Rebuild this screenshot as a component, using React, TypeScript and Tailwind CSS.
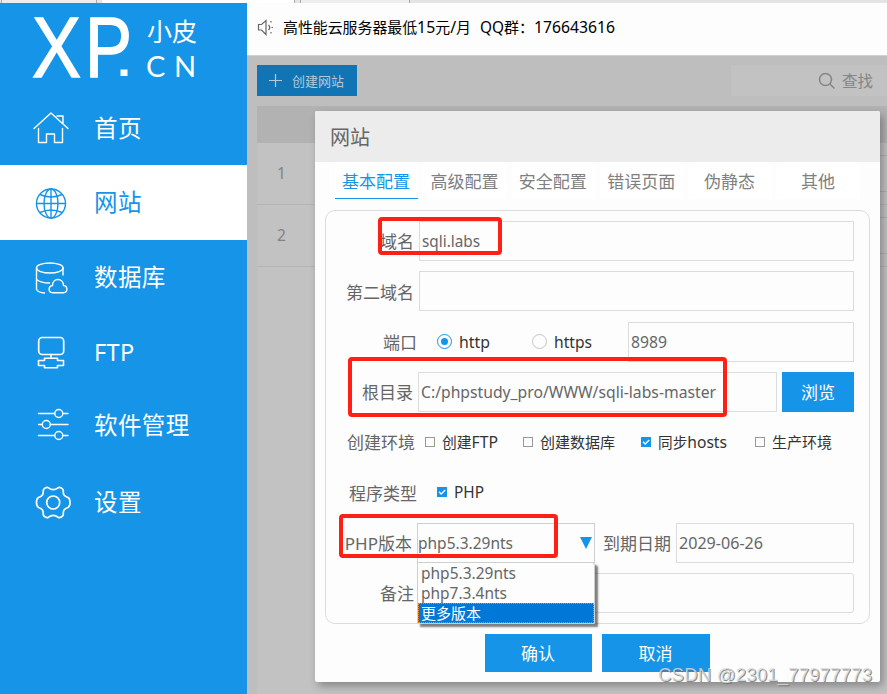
import React from 'react';
import clsx from 'clsx';

const tabs = ['基本配置', '高级配置', '安全配置', '错误页面', '伪静态', '其他'];

export default function App() {
  return (
    <div className="relative h-[694px] w-[887px] overflow-hidden bg-[#bebebe] font-['Noto_Sans','Noto_Sans_CJK_SC',sans-serif]">
      <TabStrip />
      <div className="flex h-[691px]">
        <Sidebar />
        <main className="flex min-w-0 flex-1 flex-col">
          <Notice />
          <SiteList />
        </main>
      </div>
      <SiteDialog />
      <div className="absolute left-[378px] top-[217px] h-[38px] w-[124px] rounded-[4px] border-4 border-[#ff2015]" />
      <div className="absolute left-[348px] top-[357px] h-[60px] w-[379px] rounded-[4px] border-4 border-[#ff2015]" />
      <div className="absolute left-[339px] top-[514px] h-[44px] w-[219px] rounded-[4px] border-4 border-[#ff2015]" />
      <svg className="absolute left-[654px] top-[661px]" width="224" height="28">
        <g fontFamily="Liberation Sans, sans-serif" fontSize="18.5">
          <text x="5" y="20.5" textLength="214" fill="#666" fillOpacity="0.75">CSDN @2301_77977773</text>
          <text x="4" y="19.5" textLength="214" fill="#d8d8d8" fillOpacity="0.85">CSDN @2301_77977773</text>
        </g>
      </svg>
    </div>
  );
}

function TabStrip() {
  return (
    <div className="flex h-[3px] bg-[#e3e4e6]">
      <div className="ml-px w-[96px] border-x border-[#aaa] bg-[#ececec]" />
      <div className="ml-[5px] w-[193px] border-r border-[#aaa] bg-white" />
      <div className="ml-[5px] w-[110px] border-x border-[#aaa] bg-[#eeeeee]" />
    </div>
  );
}

function Sidebar() {
  return (
    <aside className="flex w-[247px] shrink-0 flex-col bg-[#1694e8] text-white">
      <svg className="overflow-visible" width="247" height="87" fill="white">
        <g fontFamily="Liberation Sans, sans-serif" fontSize="85" stroke="white" strokeWidth="1.400">
          <text x="32" y="74" textLength="49" lengthAdjust="spacingAndGlyphs">X</text>
          <text x="85" y="74" textLength="47" lengthAdjust="spacingAndGlyphs">P</text>
        </g>
        <rect x="120.500" y="66.500" width="7" height="6.500" />
        <text x="147" y="38" fontSize="25" fontFamily="Noto Sans CJK SC, sans-serif">小皮</text>
        <text x="146" y="74" fontSize="29" fontFamily="Lato, sans-serif">C</text>
        <text x="174" y="74" fontSize="29" fontFamily="Lato, sans-serif">N</text>
      </svg>
      <NavItem className="h-[75px] pt-px" icon={<HomeIcon />} text="首页" />
      <NavItem className="h-[75px] bg-white text-[#1694e8]" icon={<GlobeIcon />} text="网站" />
      <NavItem className="h-[75px]" icon={<DatabaseIcon />} text="数据库" />
      <NavItem className="h-[75px]" icon={<FtpIcon />} text="FTP" />
      <NavItem className="h-[70px]" icon={<SlidersIcon />} text="软件管理" />
      <NavItem className="h-[85px]" icon={<GearIcon />} text="设置" />
    </aside>
  );
}

function NavItem({ icon, text, className }: { icon: React.ReactNode; text: string; className: string }) {
  return (
    <div className={clsx('flex shrink-0 items-center pl-[31px]', className)}>
      {icon}
      <span className="ml-[23px] pb-px text-[23.5px] leading-[28px] tracking-[0.4px]">{text}</span>
    </div>
  );
}

function NavSvg({ children }: { children: React.ReactNode }) {
  return (
    <svg width="40" height="40" fill="none" stroke="currentColor" strokeWidth="1.400" strokeLinejoin="round" strokeLinecap="round">
      {children}
    </svg>
  );
}

function HomeIcon() {
  return (
    <NavSvg>
      <path d="M3 20.500 20 5l17 15.500M26 8h6v8M7.500 20.500v14H15.500v-8.500h8v8.500h8v-14" />
    </NavSvg>
  );
}

function GlobeIcon() {
  return (
    <NavSvg>
      <circle cx="20" cy="20.500" r="14.500" />
      <ellipse cx="20" cy="20.500" rx="7" ry="14.500" />
      <path d="M20 6v29M5.500 20.500h29M9 11.500q11 5 22 0M9 29.500q11-5 22 0" />
    </NavSvg>
  );
}

function DatabaseIcon() {
  return (
    <NavSvg>
      <ellipse cx="18.800" cy="10" rx="13.300" ry="5" />
      <path d="M5.500 10v21.500c1.500 2.500 4.500 3.300 8 3.500M32 10v7M5.500 21.500c3 2.500 7 3.500 13 3.500" />
      <path d="M21.500 34.700c-4.500 0-4.500-6.500 0-7.200 0-8 10.800-8 11 0 4.500.5 4.500 7.200 0 7.200z" />
    </NavSvg>
  );
}

function FtpIcon() {
  return (
    <NavSvg>
      <rect x="7.700" y="4.500" width="25" height="17" rx="3.500" strokeWidth="1.700" />
      <path d="M20 21.500V25M13.500 25.300h13v2.200h6v5h-6v2.200h-13v-2.200h-6v-5h6z" strokeWidth="1.600" />
    </NavSvg>
  );
}

function SlidersIcon() {
  return (
    <NavSvg>
      <path d="M7.500 8.500h16M32 8.500h5M7.500 19.500h3.500M19.500 19.500h17.500M7.500 30.500h16M32 30.500h5" />
      <circle cx="27.800" cy="8.500" r="4" />
      <circle cx="15.300" cy="19.500" r="4" />
      <circle cx="27.800" cy="30.500" r="4" />
    </NavSvg>
  );
}

function GearIcon() {
  return (
    <NavSvg>
      <g strokeWidth="1.700">
        <path d="M17.500 4.800C20.500 7.200 24 7.200 27 4.800C29 3.600 32 5.500 32.300 7.500C32 11.500 33 13 37 14.500C39.700 16 39.700 23 37 24.500C33 26 32 27.500 32.300 31.500C32 33.500 29 35.400 27 34.200C24 31.800 20.500 31.800 17.500 34.200C15.500 35.400 12.500 33.500 12.200 31.500C12.500 27.500 11.500 26 7.500 24.500C4.800 23 4.800 16 7.500 14.500C11.500 13 12.500 11.500 12.200 7.500C12.500 5.500 15.500 3.600 17.500 4.800Z" />
        <circle cx="22.200" cy="19.500" r="6.500" />
      </g>
    </NavSvg>
  );
}

function Notice() {
  return (
    <header className="flex h-[53px] shrink-0 items-start border-b border-[#d0d0d0] bg-[#fdfdfd] pl-[10px] pt-[14px] text-black">
      <svg width="18" height="20" fill="none" stroke="#666" strokeWidth="1.200">
        <path d="M1.500 7.500h3L9 3.500v14L4.500 13h-3zM11.500 8q2.500 2.500 0 5M14 4v1.500M14 15v1.500M14.500 10.500h1.500" />
      </svg>
      <Text className="ml-[8px]" text="高性能云服务器最低15元/月" length={188} />
      <Text className="ml-[9px]" text="QQ" length={24} />
      <Text text="群：" length={30} />
      <Text text="176643616" length={81} />
    </header>
  );
}

// list page dimmed by the dialog mask
function SiteList() {
  return (
    <div className="flex flex-1 flex-col pl-[10px] pt-[9px]">
      <div className="flex h-[31px] justify-between">
        <button className="flex w-[100px] items-center bg-[#1074b5] pl-[12px] text-[13px] text-[#b7c9d5]">
          <svg width="13" height="13" stroke="currentColor" strokeWidth="1.200">
            <path d="M6.500 0v13M0 6.500h13" />
          </svg>
          <span className="ml-[10px] pt-[2px]">创建网站</span>
        </button>
        <div className="flex w-[156px] items-center bg-[#c2c2c2] pl-[87px] text-[15.500px] text-[#858585]">
          <svg width="18" height="18" fill="none" stroke="currentColor" strokeWidth="1.500">
            <circle cx="7.500" cy="7.500" r="6" />
            <path d="m12 12 4.500 4.500" />
          </svg>
          <span className="ml-[6px] pt-[2px]">查找</span>
        </div>
      </div>
      <div className="mt-[10px] h-[37px] bg-[#b2b2b2]" />
      <SiteRow id="1" />
      <SiteRow id="2" />
      <div className="flex-1 bg-[#c2c2c2]" />
    </div>
  );
}

function SiteRow({ id }: { id: string }) {
  return (
    <div className="flex h-[62px] items-center justify-between border-b border-[#b5b5b5] bg-[#c2c2c2] pl-[20px] text-[15.500px] text-[#808387]">
      <span>{id}</span>
      <div className="h-[37px] w-[10px] border-y border-[#a6b1b9]" />
    </div>
  );
}

function SiteDialog() {
  return (
    <section className="absolute left-[315px] top-[111px] flex h-[571px] w-[565px] flex-col rounded-[2px] bg-[#fdfdfd] text-[17px] text-[#666] shadow-[3px_4px_9px_rgba(0,0,0,0.3)]">
      <h1 className="flex h-[51px] shrink-0 items-center rounded-t-[2px] bg-[#ececec] pl-[15px] pt-[2px] text-[20px]">网站</h1>
      <nav className="flex h-[37px] shrink-0 gap-[5.400px] pl-[20px] text-[#808080]">
        {tabs.map((tab, i) => (
          <div
            key={tab}
            className={clsx('flex w-[83px] items-center justify-center border-b bg-white pr-px pt-[4px]', i === 0 ? 'border-[#1694e8] text-[#1694e8]' : 'border-transparent')}
          >
            {tab}
          </div>
        ))}
      </nav>
      <div className="ml-[10px] mt-[11px] flex h-[414px] w-[545px] shrink-0 flex-col gap-[10.286px] rounded-[10px] border border-[#dcdcdc] pt-[10px]">
        <Row label="域名" className="w-[88px]">
          <Field className="ml-[5px] w-[435px]" text="sqli.labs" length={58} />
        </Row>
        <Row label="第二域名" className="w-[88px]">
          <Field className="ml-[5px] w-[435px]" />
        </Row>
        <Row label="端口" className="w-[91px]">
          <div className="ml-[20px] flex size-[15px] items-center justify-center rounded-full border border-[#1694e8]">
            <div className="size-[7px] rounded-full bg-[#1694e8]" />
          </div>
          <Text className="ml-[7px] text-[#333]" text="http" length={31} />
          <div className="ml-[42px] size-[15px] rounded-full border border-[#c4c4c4]" />
          <Text className="ml-[7px] text-[#333]" text="https" length={38} />
          <Field className="ml-[36px] w-[226px]" text="8989" length={36} />
        </Row>
        <Row label="根目录" className="w-[87px]">
          <Field className="ml-[5px] w-[359px]" text="C:/phpstudy_pro/WWW/sqli-labs-master" length={295} />
          <button className="ml-[5px] h-[40px] w-[72px] bg-[#1694e8] pt-[2px] text-white">浏览</button>
        </Row>
        <Row label="创建环境" className="w-[89px]">
          <Check className="ml-[10px] w-[88px]" text="创建FTP" length={56} />
          <Check className="ml-[10px] w-[108px]" text="创建数据库" length={75} />
          <Check className="ml-[10px] w-[104px]" text="同步hosts" length={69} checked />
          <Check className="ml-[10px]" text="生产环境" length={60} />
        </Row>
        <Row label="程序类型" className="w-[91px]">
          <Check className="ml-[20px]" text="PHP" length={30} checked />
        </Row>
        <Row label="PHP版本" className="w-[86px]">
          <div className="relative ml-[5px] flex h-[40px] w-[178px] items-center justify-between border border-[#cfcfcf] pr-[2px]">
            <Text text="php5.3.29nts" length={95} />
            <svg width="12" height="12">
              <path d="M0 0h12L6 12z" fill="#1694e8" />
            </svg>
            <VersionMenu />
          </div>
          <span className="ml-[8px] pt-[2px]">到期日期</span>
          <Field className="ml-[5px] w-[178px]" text="2029-06-26" length={84} />
        </Row>
        <Row label="备注" className="w-[88px]">
          <Field className="ml-[5px] w-[435px] rounded-[3px]" />
        </Row>
      </div>
      <div className="mt-[10px] flex h-[38px] gap-[10px] pl-[170px] text-white">
        <button className="w-[107px] bg-[#1694e8] pr-px pt-[2px]">确认</button>
        <button className="w-[108px] bg-[#1694e8] pr-px pt-[2px]">取消</button>
      </div>
    </section>
  );
}

function VersionMenu() {
  return (
    <div className="absolute -left-px top-[38px] z-10 h-[62px] w-[178px] rounded-tr-[3px] border border-[#cfcfcf] bg-[#fdfdfd] shadow-[3px_3px_2px_rgba(0,0,0,0.5)]">
      <div className="flex h-[20px] items-center pl-[3px]">
        <Text text="php5.3.29nts" length={95} />
      </div>
      <div className="flex h-[20px] items-center pl-[3px]">
        <Text text="php7.3.4nts" length={86} />
      </div>
      <div className="flex h-[20px] items-center border border-dotted border-[#f08a28] bg-[#0078d7] pl-[2px] text-white">
        <Text text="更多版本" length={60} />
      </div>
    </div>
  );
}

function Row({ label, className, children }: { label: string; className: string; children: React.ReactNode }) {
  return (
    <div className="flex h-[40px] shrink-0 items-center">
      <label className={clsx('shrink-0 whitespace-nowrap pt-[2px] text-right', className)}>{label}</label>
      {children}
    </div>
  );
}

// single line of text fitted to a given width, latin runs are set a bit larger than chinese
function Text({ text, length, className }: { text: string; length: number; className?: string }) {
  return (
    <svg className={clsx('shrink-0 overflow-visible', className)} width={length} height="20" fill="currentColor" fontSize="15">
      <text x="0" y="16" textLength={length} lengthAdjust="spacingAndGlyphs">
        {text.split(/([!-~]+)/).map((run, i) => (
          <tspan key={i} fontSize={i % 2 ? 16 : 15}>{run}</tspan>
        ))}
      </text>
    </svg>
  );
}

function Field({ text, length = 0, className }: { text?: string; length?: number; className: string }) {
  return (
    <div className={clsx('flex h-[40px] shrink-0 items-center border border-[#dcdcdc] pl-[2px]', className)}>
      {text && <Text text={text} length={length} />}
    </div>
  );
}

function Check({ text, length, checked, className }: { text: string; length: number; checked?: boolean; className: string }) {
  return (
    <div className={clsx('flex shrink-0 items-center text-[#333]', className)}>
      <svg width="10" height="10" fill="none">
        {checked ? <rect width="10" height="10" fill="#1694e8" /> : <rect x="0.500" y="0.500" width="9" height="9" stroke="#999" />}
        {checked && <path d="m2 4.800 2.200 2.200L8.200 3" stroke="white" strokeWidth="1.300" />}
      </svg>
      <Text className="ml-[7px]" text={text} length={length} />
    </div>
  );
}
